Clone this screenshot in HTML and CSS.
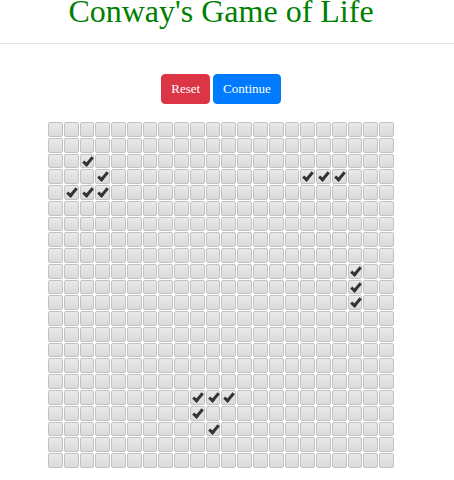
FILE: index.html
```
<!DOCTYPE html>
<html>
<head>
<meta charset="utf-8">
<title>Conway's Game of Life</title>
<link rel="stylesheet" href="styles.css">
</head>
<body>
<header class="header">
  <div class="inner"><h1 class="title">Conway's Game of Life</h1></div>
</header>
<main class="inner">
  <div class="controls">
    <button class="btn btn-reset">Reset</button>
    <button class="btn btn-continue">Continue</button>
  </div>
  <div class="board" id="board"></div>
</main>
<script src="script.js"></script>
</body>
</html>
```
FILE: styles.css
```
html, body {
  margin: 0;
  padding: 0;
  background: #ffffff;
  font-family: "Liberation Serif", "Times New Roman", serif;
}
.inner {
  width: 442px;
}
.header {
  border-bottom: 1px solid #e2e2e2;
  height: 43px;
  overflow: hidden;
}
.title {
  margin: -7px 0 0 0;
  font-size: 32px;
  line-height: 36px;
  font-weight: normal;
  color: #008000;
  text-align: center;
}
.controls {
  display: flex;
  justify-content: center;
  gap: 3px;
  margin-top: 30px;
}
.btn {
  height: 30px;
  padding: 0 9px;
  border: 1px solid transparent;
  border-radius: 4px;
  color: #ffffff;
  font-family: "Liberation Serif", "Times New Roman", serif;
  font-size: 13px;
}
.btn-reset {
  background: #dc3545;
  border-color: #dc3545;
}
.btn-continue {
  background: #007bff;
  border-color: #007bff;
}
.board {
  width: 346px;
  margin: 18px auto 0;
  display: grid;
  grid-template-columns: repeat(22, 1fr);
  grid-auto-rows: 14.77px;
  gap: 1px;
}
.cell {
  position: relative;
  box-sizing: border-box;
  border: 1px solid #c2c2c2;
  border-radius: 2px;
  background: linear-gradient(#e9e9e9, #dadada);
}
.cell.on::after {
  content: "";
  position: absolute;
  left: 4px;
  top: 0px;
  width: 3px;
  height: 8px;
  border-right: 3px solid #333333;
  border-bottom: 3px solid #333333;
  transform: rotate(40deg);
}
```
FILE: script.js
```
(function () {
  var live = {
    "2,2": 1, "3,3": 1, "4,1": 1, "4,2": 1, "4,3": 1,
    "3,16": 1, "3,17": 1, "3,18": 1,
    "9,19": 1, "10,19": 1, "11,19": 1,
    "17,9": 1, "17,10": 1, "17,11": 1, "18,9": 1, "19,10": 1
  };
  var board = document.getElementById("board");
  for (var r = 0; r < 22; r++) {
    for (var c = 0; c < 22; c++) {
      var d = document.createElement("span");
      d.className = live[r + "," + c] ? "cell on" : "cell";
      board.appendChild(d);
    }
  }
})();
```
